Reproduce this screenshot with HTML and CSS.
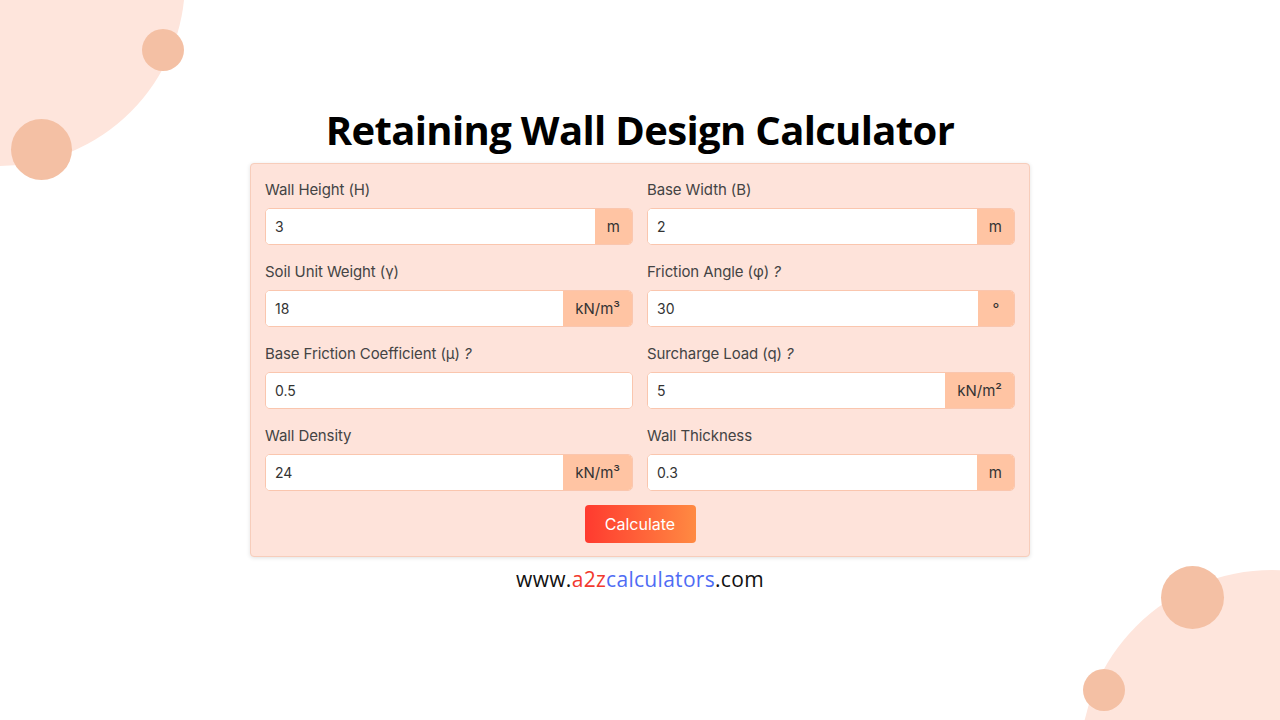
FILE: index.html
```html
<!DOCTYPE html>
<html lang="en">
<head>
<meta charset="utf-8">
<title>Retaining Wall Design Calculator</title>
<link rel="stylesheet" href="styles.css">
</head>
<body>
<svg class="deco" width="1280" height="720" viewBox="0 0 1280 720" aria-hidden="true">
  <circle cx="0" cy="-19" r="185" fill="#fee5dc"/>
  <circle cx="163" cy="50" r="21" fill="#f4c0a4"/>
  <circle cx="41.5" cy="149.5" r="30.5" fill="#f4c0a4"/>
  <circle cx="1272" cy="762" r="192" fill="#fee5dc"/>
  <circle cx="1192.5" cy="597.5" r="31.5" fill="#f4c0a4"/>
  <circle cx="1104" cy="690" r="21" fill="#f4c0a4"/>
</svg>

<main class="page">
  <h1 class="title">Retaining Wall Design Calculator</h1>
  <section class="card">
    <div class="grid">
      <div class="field">
        <label class="label">Wall Height (H)</label>
        <div class="input-group"><input class="input" value="3"><span class="unit">m</span></div>
      </div>
      <div class="field">
        <label class="label">Base Width (B)</label>
        <div class="input-group"><input class="input" value="2"><span class="unit">m</span></div>
      </div>
      <div class="field">
        <label class="label">Soil Unit Weight (γ)</label>
        <div class="input-group"><input class="input" value="18"><span class="unit">kN/m³</span></div>
      </div>
      <div class="field">
        <label class="label">Friction Angle (φ) <span class="help">?</span></label>
        <div class="input-group"><input class="input" value="30"><span class="unit">°</span></div>
      </div>
      <div class="field">
        <label class="label">Base Friction Coefficient (μ) <span class="help">?</span></label>
        <div class="input-group"><input class="input input-solo" value="0.5"></div>
      </div>
      <div class="field">
        <label class="label">Surcharge Load (q) <span class="help">?</span></label>
        <div class="input-group"><input class="input" value="5"><span class="unit">kN/m²</span></div>
      </div>
      <div class="field">
        <label class="label">Wall Density</label>
        <div class="input-group"><input class="input" value="24"><span class="unit">kN/m³</span></div>
      </div>
      <div class="field">
        <label class="label">Wall Thickness</label>
        <div class="input-group"><input class="input" value="0.3"><span class="unit">m</span></div>
      </div>
    </div>
    <div class="actions">
      <button class="btn" type="button">Calculate</button>
    </div>
  </section>
  <p class="footer">www.<span class="f-red">a2z</span><span class="f-blue">calculators</span>.com</p>
</main>
</body>
</html>
```

FILE: styles.css
```css
* { box-sizing: border-box; }

html, body {
  margin: 0;
  padding: 0;
  width: 1280px;
  height: 720px;
  overflow: hidden;
  background: #ffffff;
}

body {
  position: relative;
  font-family: Inter, "Noto Sans", sans-serif;
}

.deco {
  position: absolute;
  left: 0;
  top: 0;
  z-index: 0;
  display: block;
}

.page {
  position: relative;
  z-index: 1;
  display: flex;
  flex-direction: column;
  align-items: center;
  padding-top: 106px;
}

.title {
  margin: 0 0 9px;
  font-family: "Open Sans", sans-serif;
  font-weight: 700;
  font-size: 40px;
  line-height: 48px;
  color: #000;
  letter-spacing: -0.65px;
}

.card {
  width: 780px;
  background: #fee3da;
  border: 1px solid #f7cdbb;
  border-radius: 4px;
  box-shadow: 0 1px 4px rgba(0, 0, 0, 0.12);
  padding: 16px 14px 13px;
}

.grid {
  display: grid;
  grid-template-columns: 1fr 1fr;
  column-gap: 14px;
  row-gap: 17px;
}

.field {
  display: flex;
  flex-direction: column;
  gap: 8px;
}

.label {
  font-size: 15px;
  line-height: 20px;
  color: #444;
  letter-spacing: -0.1px;
}

.help { font-style: italic; }

.input-group {
  display: flex;
  height: 37px;
  border: 1px solid #fac6ae;
  border-radius: 5px;
  overflow: hidden;
  background: #fff;
}

.input {
  flex: 1;
  min-width: 0;
  border: 0;
  outline: none;
  padding: 0 9px;
  font-family: Inter, "Noto Sans", sans-serif;
  font-size: 14px;
  color: #333;
  background: #fff;
}

.unit {
  display: flex;
  align-items: center;
  justify-content: center;
  min-width: 36px;
  padding: 0 12px;
  background: #ffc4a3;
  font-size: 15px;
  color: #333;
}

.actions {
  display: flex;
  justify-content: center;
  margin-top: 14px;
}

.btn {
  width: 111px;
  height: 38px;
  border: 0;
  border-radius: 4px;
  background: linear-gradient(90deg, #ff3a2f 0%, #ff8a42 100%);
  color: #fff;
  font-family: Inter, "Noto Sans", sans-serif;
  font-size: 16px;
}

.footer {
  margin: 10px 0 0;
  font-family: "Open Sans", sans-serif;
  font-size: 21px;
  line-height: 24px;
  letter-spacing: 0.3px;
  color: #111;
}

.f-red { color: #f2392e; }
.f-blue { color: #4f6cf4; }
```
